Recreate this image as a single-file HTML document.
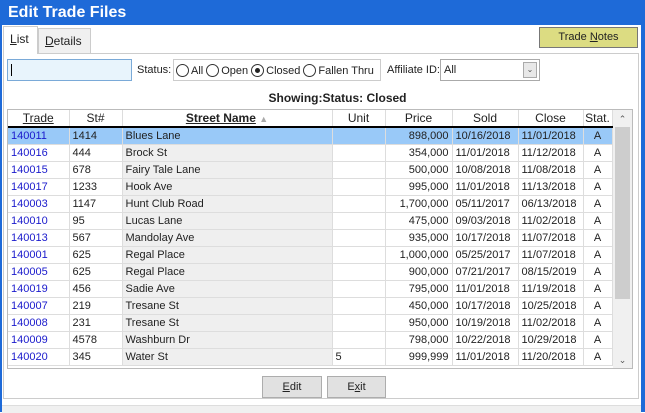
<!DOCTYPE html><html><head><style>
body{margin:0;width:645px;height:412px;overflow:hidden;font-family:"Liberation Sans",sans-serif;font-size:11px;color:#222;background:#fff;position:relative}
.a{position:absolute}
table{border-collapse:collapse;table-layout:fixed;position:absolute;left:8px;top:110px;width:604px}
td{height:16px;padding:0 3px;border-right:1px solid #ddd;border-bottom:1px solid #ddd;white-space:nowrap;overflow:hidden;font-size:11px}
th{height:16px;font-weight:normal;font-size:12px;border-right:1px solid #ddd;border-bottom:2px solid #000;padding:0}
td.t{color:#1a1acc}td.s{background:#efefef}td.r{text-align:right}td.c{text-align:center}
tr.sel td{background:#99c9f8}
.rb{display:inline-block;width:11px;height:11px;border:1px solid #333;border-radius:50%;vertical-align:-3px;margin:0 2px 0 3px;position:relative}
.btn{position:absolute;background:#e1e1e1;border:1px solid #adadad;text-align:center;font-size:11px;line-height:20px}
</style></head><body>
<div class="a" style="left:0;top:0;width:645px;height:412px;border-left:2px solid #1e6ad8;border-right:4px solid #1e6ad8;box-sizing:border-box"></div>
<div class="a" style="left:0;top:0;width:645px;height:25px;background:#1e6ad8;color:#fff;font-weight:bold;font-size:16px;line-height:25px;padding-left:8px;box-sizing:border-box">Edit Trade Files</div>
<div class="a" style="left:3px;top:53px;width:636px;height:346px;border:1px solid #ccc;box-sizing:border-box"></div>
<div class="a" style="left:3px;top:26px;width:35px;height:28px;background:#fff;border:1px solid #ccc;border-bottom:none;box-sizing:border-box;font-size:12px;padding:5px 0 0 6px"><u>L</u>ist</div>
<div class="a" style="left:38px;top:28px;width:53px;height:25px;background:#f0f0f0;border:1px solid #ccc;border-bottom:none;box-sizing:border-box;font-size:12px;padding:5px 0 0 6px"><u>D</u>etails</div>
<div class="btn" style="left:539px;top:27px;width:99px;height:21px;background:#dcdc82;border-color:#777;box-sizing:border-box;line-height:19px">Trade <u>N</u>otes</div>
<div class="a" style="left:7px;top:59px;width:125px;height:22px;background:#e8f4fc;border:1px solid #7aaad8;box-sizing:border-box"><div style="margin:4px 0 0 3px;width:1px;height:12px;background:#000"></div></div>
<div class="a" style="left:137px;top:64px;font-size:11px">Status:</div>
<div class="a" style="left:173px;top:59px;width:208px;height:22px;border:1px solid #ccc;box-sizing:border-box;padding-top:4px;font-size:11px;white-space:nowrap"><span class="rb" style="margin-left:2px"></span>All<span class="rb"></span>Open<span class="rb"><span style="position:absolute;left:3px;top:3px;width:5px;height:5px;border-radius:50%;background:#222"></span></span>Closed<span class="rb"></span>Fallen Thru</div>
<div class="a" style="left:387px;top:64px">Affiliate ID:</div>
<div class="a" style="left:440px;top:59px;width:100px;height:22px;border:1px solid #aaa;box-sizing:border-box;padding:4px 3px;font-size:11px">All<div class="a" style="left:82px;top:2px;width:14px;height:16px;background:#e8e8e8;border:1px solid #aaa;box-sizing:border-box;font-size:8px;text-align:center;line-height:14px;color:#555">&#8964;</div></div>
<div class="a" style="left:0;width:645px;top:91px;text-align:center;font-weight:bold;font-size:12px;padding-left:30px;box-sizing:border-box">Showing:Status: Closed</div>
<div class="a" style="left:7px;top:109px;width:626px;height:260px;border:1px solid #bbb;box-sizing:border-box"></div>
<div class="a" style="left:613px;top:110px;width:19px;height:258px;background:#f0f0f0"><div style="text-align:center;font-size:9px;margin-top:4px;color:#555">&#8963;</div><div style="margin:2px 2px;height:172px;background:#cdcdcd"></div><div style="text-align:center;font-size:9px;position:absolute;bottom:2px;width:19px;color:#555">&#8964;</div></div>
<table>
<colgroup><col style="width:61px"><col style="width:53px"><col style="width:210px"><col style="width:53px"><col style="width:67px"><col style="width:66px"><col style="width:65px"><col style="width:29px"></colgroup>
<tr><th><u>Trade</u></th><th>St#</th><th><b><u>Street Name</u></b> <span style="color:#aaa;font-size:9px">&#9650;</span></th><th>Unit</th><th>Price</th><th>Sold</th><th>Close</th><th>Stat.</th></tr>
<tr class="sel"><td class="t">140011</td><td>1414</td><td class="s">Blues Lane</td><td></td><td class="r">898,000</td><td>10/16/2018</td><td>11/01/2018</td><td class="c">A</td></tr>
<tr><td class="t">140016</td><td>444</td><td class="s">Brock St</td><td></td><td class="r">354,000</td><td>11/01/2018</td><td>11/12/2018</td><td class="c">A</td></tr>
<tr><td class="t">140015</td><td>678</td><td class="s">Fairy Tale Lane</td><td></td><td class="r">500,000</td><td>10/08/2018</td><td>11/08/2018</td><td class="c">A</td></tr>
<tr><td class="t">140017</td><td>1233</td><td class="s">Hook Ave</td><td></td><td class="r">995,000</td><td>11/01/2018</td><td>11/13/2018</td><td class="c">A</td></tr>
<tr><td class="t">140003</td><td>1147</td><td class="s">Hunt Club Road</td><td></td><td class="r">1,700,000</td><td>05/11/2017</td><td>06/13/2018</td><td class="c">A</td></tr>
<tr><td class="t">140010</td><td>95</td><td class="s">Lucas Lane</td><td></td><td class="r">475,000</td><td>09/03/2018</td><td>11/02/2018</td><td class="c">A</td></tr>
<tr><td class="t">140013</td><td>567</td><td class="s">Mandolay Ave</td><td></td><td class="r">935,000</td><td>10/17/2018</td><td>11/07/2018</td><td class="c">A</td></tr>
<tr><td class="t">140001</td><td>625</td><td class="s">Regal Place</td><td></td><td class="r">1,000,000</td><td>05/25/2017</td><td>11/07/2018</td><td class="c">A</td></tr>
<tr><td class="t">140005</td><td>625</td><td class="s">Regal Place</td><td></td><td class="r">900,000</td><td>07/21/2017</td><td>08/15/2019</td><td class="c">A</td></tr>
<tr><td class="t">140019</td><td>456</td><td class="s">Sadie Ave</td><td></td><td class="r">795,000</td><td>11/01/2018</td><td>11/19/2018</td><td class="c">A</td></tr>
<tr><td class="t">140007</td><td>219</td><td class="s">Tresane St</td><td></td><td class="r">450,000</td><td>10/17/2018</td><td>10/25/2018</td><td class="c">A</td></tr>
<tr><td class="t">140008</td><td>231</td><td class="s">Tresane St</td><td></td><td class="r">950,000</td><td>10/19/2018</td><td>11/02/2018</td><td class="c">A</td></tr>
<tr><td class="t">140009</td><td>4578</td><td class="s">Washburn Dr</td><td></td><td class="r">798,000</td><td>10/22/2018</td><td>10/29/2018</td><td class="c">A</td></tr>
<tr><td class="t">140020</td><td>345</td><td class="s">Water St</td><td>5</td><td class="r">999,999</td><td>11/01/2018</td><td>11/20/2018</td><td class="c">A</td></tr>
</table>
<div class="btn" style="left:262px;top:376px;width:60px;height:22px;box-sizing:border-box"><u>E</u>dit</div>
<div class="btn" style="left:327px;top:376px;width:59px;height:22px;box-sizing:border-box">E<u>x</u>it</div>
<div class="a" style="left:2px;top:405px;width:639px;height:7px;background:#f0f0f0;border-top:1px solid #ddd"></div>
</body></html>
